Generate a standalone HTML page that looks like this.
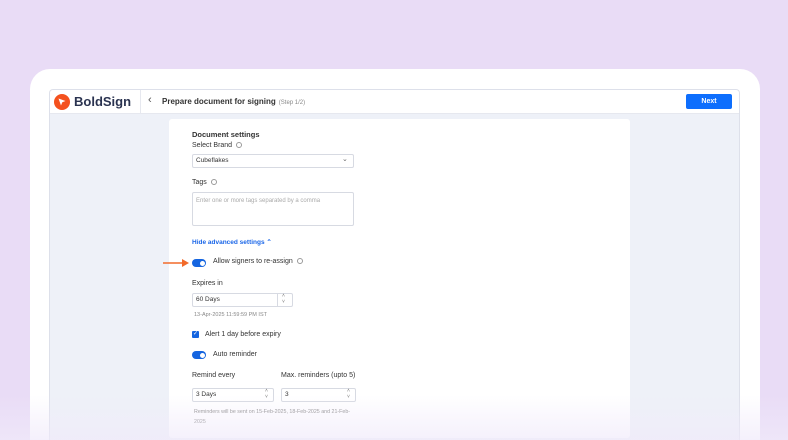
<!DOCTYPE html>
<html style="width:788px;height:440px;overflow:hidden"><head><style>
*{box-sizing:border-box;margin:0;padding:0}
body{width:788px;height:440px;overflow:hidden;background:#e9dcf6;font-family:"Liberation Sans",sans-serif;color:#333;position:relative}
.card{position:absolute;left:30px;top:69px;width:730px;height:371px;background:#fff;border-radius:20px 20px 0 0}
.frame{position:absolute;left:49px;top:89px;width:691px;height:351px;border:1px solid #dde0ea;border-bottom:none;border-radius:4px 4px 0 0;background:#eef1f8;overflow:hidden}
.hdr{position:absolute;left:0;top:0;width:100%;height:24px;background:#fff;border-bottom:1px solid #e6e8ef}
.logo{position:absolute;left:4px;top:4px;width:16px;height:16px;border-radius:50%;background:#f4511e}
.brand{position:absolute;left:24px;top:4px;font-size:13px;font-weight:bold;color:#2a3350}
.div{position:absolute;left:90px;top:0;width:1px;height:24px;background:#e6e8ef}
.back{position:absolute;left:98px;top:4px;font-size:11px;color:#555}
.title{position:absolute;left:112px;top:7px;font-size:8px;font-weight:bold;color:#333}
.title span{font-weight:normal;color:#888;font-size:6px;margin-left:3px}
.next{position:absolute;left:636px;top:4px;width:46px;height:15px;background:#0d6efd;border-radius:2px;color:#fff;font-size:7px;font-weight:bold;text-align:center;line-height:15px}
.t{position:absolute;font-size:7px;color:#333;white-space:nowrap}
.box{position:absolute;border:1px solid #d7dae2;border-radius:2px;background:#fff}
.tog{position:absolute;width:14px;height:8px;border-radius:4px;background:#1565e0}
.tog:after{content:"";position:absolute;right:1.5px;top:1.5px;width:5px;height:5px;border-radius:50%;background:#fff}
.i{display:inline-block;width:6px;height:6px;border:0.7px solid #999;border-radius:50%;margin-left:4px;vertical-align:middle}
.fade{position:absolute;left:0;top:395px;width:788px;height:45px;background:linear-gradient(rgba(240,236,250,0),rgba(240,234,250,0.7))}
</style></head><body>
<div class="card"></div>
<div class="frame">
 <div class="hdr">
  <div class="logo"><svg width="16" height="16" viewBox="0 0 16 16"><path d="M4.5 4.5L11.5 7L8.3 8.3L7 11.5Z" fill="#fff"/></svg></div>
  <div class="brand">BoldSign</div>
  <div class="div"></div>
  <div class="back">‹</div>
  <div class="title">Prepare document for signing<span>(Step 1/2)</span></div>
  <div class="next">Next</div>
 </div>
</div>
<div style="position:absolute;left:169px;top:119px;width:461px;height:319px;background:#fff;border-radius:3px"></div>
<div class="t" style="left:192px;top:130px;font-weight:bold;font-size:7.5px">Document settings</div>
<div class="t" style="left:192px;top:142px">Select Brand<span class="i"></span></div>
<div class="box" style="left:192px;top:154px;width:162px;height:14px"></div>
<div class="t" style="left:196px;top:157px;font-size:6.5px">Cubeflakes</div>
<div class="t" style="left:342px;top:155px;font-size:7px;color:#666">⌄</div>
<div class="t" style="left:192px;top:179px">Tags<span class="i"></span></div>
<div class="box" style="left:192px;top:192px;width:162px;height:34px"></div>
<div class="t" style="left:196px;top:198px;font-size:6px;color:#aaa">Enter one or more tags separated by a comma</div>
<div class="t" style="left:192px;top:238px;color:#1a66e8;font-weight:bold;font-size:6.5px">Hide advanced settings ⌃</div>
<svg style="position:absolute;left:163px;top:258px" width="28" height="10"><path d="M0 5H20" stroke="#f26a2a" stroke-width="1.6"/><path d="M19 1L26 5L19 9Z" fill="#f26a2a"/></svg>
<div class="tog" style="left:192px;top:259px"></div>
<div class="t" style="left:213px;top:258px">Allow signers to re-assign<span class="i"></span></div>
<div class="t" style="left:192px;top:280px">Expires in</div>
<div class="box" style="left:192px;top:293px;width:101px;height:14px"></div>
<div style="position:absolute;left:277px;top:293px;width:1px;height:14px;background:#d7dae2"></div>
<div class="t" style="left:196px;top:296px;font-size:6.5px">60 Days</div>
<div class="t" style="left:282px;top:293px;font-size:5px;color:#777;line-height:6px">˄<br>˅</div>
<div class="t" style="left:194px;top:312px;font-size:5.5px;color:#888">13-Apr-2025 11:59:59 PM IST</div>
<div style="position:absolute;left:192px;top:331px;width:7px;height:7px;background:#1565e0;border-radius:1px;color:#fff;font-size:6px;line-height:7px;text-align:center">✓</div>
<div class="t" style="left:205px;top:331px">Alert 1 day before expiry</div>
<div class="tog" style="left:192px;top:351px"></div>
<div class="t" style="left:213px;top:351px">Auto reminder</div>
<div class="t" style="left:192px;top:372px">Remind every</div>
<div class="t" style="left:281px;top:372px">Max. reminders (upto 5)</div>
<div class="box" style="left:192px;top:388px;width:82px;height:14px"></div>
<div class="t" style="left:196px;top:391px;font-size:6.5px">3 Days</div>
<div class="t" style="left:265px;top:388px;font-size:5px;color:#777;line-height:6px">˄<br>˅</div>
<div class="box" style="left:281px;top:388px;width:75px;height:14px"></div>
<div class="t" style="left:285px;top:391px;font-size:6.5px">3</div>
<div class="t" style="left:347px;top:388px;font-size:5px;color:#777;line-height:6px">˄<br>˅</div>
<div class="t" style="left:194px;top:407px;font-size:5.3px;color:#888;line-height:10px">Reminders will be sent on 15-Feb-2025, 18-Feb-2025 and 21-Feb-<br>2025</div>
<div class="fade"></div>
</body></html>
